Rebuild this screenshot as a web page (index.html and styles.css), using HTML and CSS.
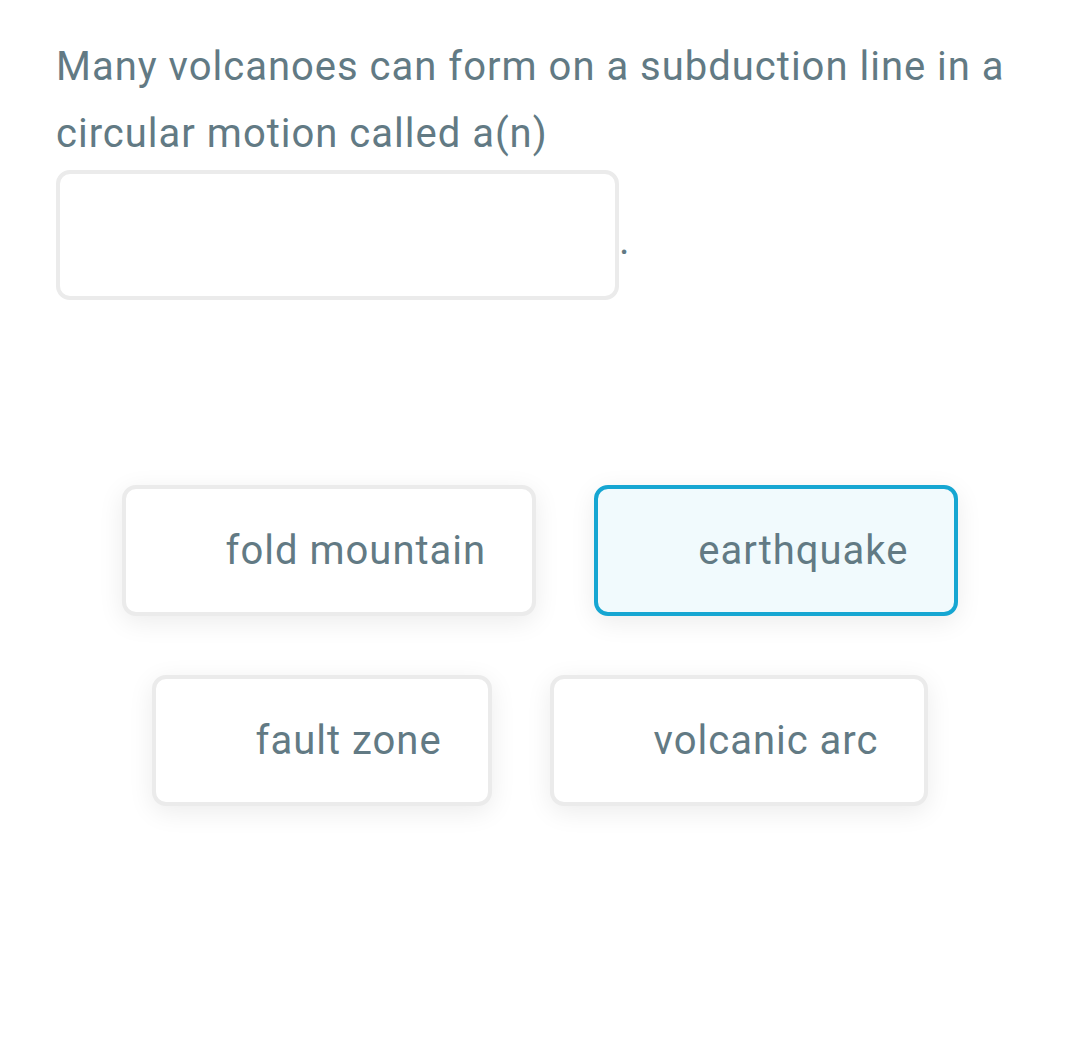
FILE: index.html
```html
<!DOCTYPE html>
<html lang="en">
<head>
<meta charset="utf-8">
<title>Question</title>
<link rel="stylesheet" href="styles.css">
</head>
<body>
<main class="page">
  <p class="question">Many volcanoes can form on a subduction line in a circular motion called a(n)</p>
  <div class="answer-row">
    <span class="blank"></span><span class="period">.</span>
  </div>
  <div class="options">
    <button class="option">fold mountain</button>
    <button class="option selected">earthquake</button>
    <button class="option">fault zone</button>
    <button class="option">volcanic arc</button>
  </div>
</main>
</body>
</html>
```
FILE: styles.css
```css
html, body {
  margin: 0;
  padding: 0;
  background: #ffffff;
}

.page {
  min-height: 1049px;
  box-sizing: border-box;
  padding: 33px 56px 120px 56px;
  font-family: Roboto, "Liberation Sans", sans-serif;
  color: #627a84;
}

.question {
  margin: 0;
  font-size: 40px;
  line-height: 67px;
  letter-spacing: 1px;
}

.answer-row {
  display: flex;
  align-items: flex-start;
  margin-top: 3px;
}

.blank {
  display: block;
  width: 563px;
  height: 130px;
  box-sizing: border-box;
  border: 4px solid #ebebeb;
  border-radius: 14px;
  background: #ffffff;
}

.period {
  margin-top: 37px;
  margin-left: 0;
  font-size: 40px;
  line-height: 67px;
}

.options {
  display: flex;
  flex-wrap: wrap;
  justify-content: center;
  gap: 59px 58px;
  margin-top: 185px;
  padding-bottom: 40px;
}

.option {
  display: flex;
  align-items: center;
  height: 131px;
  box-sizing: border-box;
  padding: 0 46px 0 100px;
  border: 4px solid #ebebeb;
  border-radius: 14px;
  background: #ffffff;
  box-shadow: 0 6px 26px rgba(0, 0, 0, 0.08);
  font-family: Roboto, "Liberation Sans", sans-serif;
  font-size: 40px;
  letter-spacing: 1px;
  color: #627a84;
  cursor: pointer;
}

.option.selected {
  border-color: #16a6d2;
  background: #f1fafd;
}
```
